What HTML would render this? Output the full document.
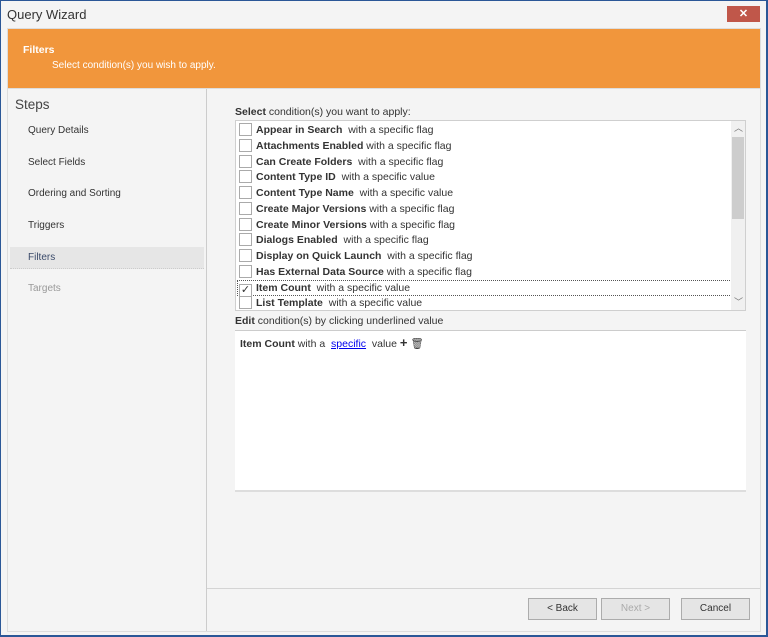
<!DOCTYPE html>
<html><head><style>
*{margin:0;padding:0;box-sizing:border-box}
body{width:768px;height:637px;background:#f4f4f4;font-family:"Liberation Sans",sans-serif;font-size:10.5px;color:#333;position:relative;overflow:hidden}
.frame{position:absolute;left:0;top:0;width:768px;height:637px;border:1px solid #2b5797;border-right-width:2px;border-bottom-width:2px}
.abs{position:absolute}
.title{left:7px;top:7px;font-size:13px;color:#333}
.close{left:727px;top:6px;width:33px;height:16px;background:#c0574a;color:#fff;text-align:center;font-size:11px;line-height:16px;font-weight:bold}
.hdr{left:7px;top:28px;width:754px;height:61px;background:#f1963c;border:1px solid #ddd}
.hdr b{position:absolute;left:15px;top:15px;color:#fff;font-size:10.5px}
.hdr span{position:absolute;left:44px;top:31px;color:#fff;font-size:10px}
.left{left:7px;top:89px;width:200px;height:543px;border-right:1px solid #ccc;border-left:1px solid #ddd}
.steps{left:15px;top:97px;font-size:13.5px;color:#444}
.it{left:28px;font-size:10px;color:#333}
.sel{left:10px;top:247px;width:194px;height:22px;background:#e6e6e6;border-bottom:1px dotted #ccc}
.list{left:235px;top:120px;width:511px;height:191px;background:#fff;border:1px solid #cfcfcf}
.row{position:absolute;left:3px;height:16px;width:493px;line-height:15px;white-space:nowrap}
.cb{display:inline-block;width:13px;height:13px;border:1px solid #aaa;background:#fff;vertical-align:-3px;margin-right:4px;position:relative}
.row b{color:#333}
.sb{position:absolute;right:0;top:0;width:14px;height:189px;background:#f0f0f0}
.thumb{position:absolute;right:1px;top:16px;width:12px;height:82px;background:#cdcdcd}
.edit{left:235px;top:330px;width:511px;height:162px;background:#fff;border-top:1px solid #ccc;border-bottom:2px solid #ddd}
.btn{top:598px;height:22px;border:1px solid #acacac;background:#e5e5e5;text-align:center;line-height:20px;font-size:10px}
</style></head><body>
<div class="frame"></div>
<div class="abs title">Query Wizard</div>
<div class="abs close">✕</div>
<div class="abs hdr"><b>Filters</b><span>Select condition(s) you wish to apply.</span></div>
<div class="abs left"></div>
<div class="abs steps">Steps</div>
<div class="abs sel"></div>
<div class="abs it" style="top:125px">Query Details</div>
<div class="abs it" style="top:157px">Select Fields</div>
<div class="abs it" style="top:188px">Ordering and Sorting</div>
<div class="abs it" style="top:220px">Triggers</div>
<div class="abs it" style="top:252px;color:#3a4a6a">Filters</div>
<div class="abs it" style="top:283px;color:#999">Targets</div>
<div class="abs" style="left:235px;top:106px"><b>Select</b> condition(s) you want to apply:</div>
<div class="abs list">
<div class="row" style="top:2px"><span class="cb"></span><b>Appear in Search</b>&nbsp; with a specific flag</div>
<div class="row" style="top:18px"><span class="cb"></span><b>Attachments Enabled</b> with a specific flag</div>
<div class="row" style="top:34px"><span class="cb"></span><b>Can Create Folders</b>&nbsp; with a specific flag</div>
<div class="row" style="top:49px"><span class="cb"></span><b>Content Type ID</b>&nbsp; with a specific value</div>
<div class="row" style="top:65px"><span class="cb"></span><b>Content Type Name</b>&nbsp; with a specific value</div>
<div class="row" style="top:81px"><span class="cb"></span><b>Create Major Versions</b> with a specific flag</div>
<div class="row" style="top:97px"><span class="cb"></span><b>Create Minor Versions</b> with a specific flag</div>
<div class="row" style="top:112px"><span class="cb"></span><b>Dialogs Enabled</b>&nbsp; with a specific flag</div>
<div class="row" style="top:128px"><span class="cb"></span><b>Display on Quick Launch</b>&nbsp; with a specific flag</div>
<div class="row" style="top:144px"><span class="cb"></span><b>Has External Data Source</b> with a specific flag</div>
<div class="row" style="top:159px;border:1px dotted #555;left:1px;padding-left:1px;width:495px;line-height:14px"><span class="cb" style="font-size:11px;line-height:11px;text-align:center;vertical-align:-2px">✓</span><b>Item Count</b>&nbsp; with a specific value</div>
<div class="row" style="top:175px"><span class="cb"></span><b>List Template</b>&nbsp; with a specific value</div>
<div class="sb"><div class="thumb"></div><div style="position:absolute;top:0;left:3px;font-size:9px;color:#777">︿</div><div style="position:absolute;bottom:2px;left:3px;font-size:9px;color:#777">﹀</div></div>
</div>
<div class="abs" style="left:235px;top:315px"><b>Edit</b> condition(s) by clicking underlined value</div>
<div class="abs edit"><div style="position:absolute;left:5px;top:4px"><b>Item Count</b> with a &nbsp;<span style="color:#00e;text-decoration:underline">specific</span>&nbsp; value <b style="font-size:13px">+</b> 🗑</div></div>
<div class="abs" style="left:207px;top:588px;width:554px;border-top:1px solid #d4d4d4"></div>
<div class="abs btn" style="left:528px;width:69px">&lt; Back</div>
<div class="abs btn" style="left:601px;width:69px;color:#aaa">Next &gt;</div>
<div class="abs btn" style="left:681px;width:69px">Cancel</div>
<div class="abs" style="left:760px;top:89px;height:543px;border-left:1px solid #ddd"></div>
<div class="abs" style="left:7px;top:631px;width:754px;border-top:1px solid #ddd"></div>
</body></html>
